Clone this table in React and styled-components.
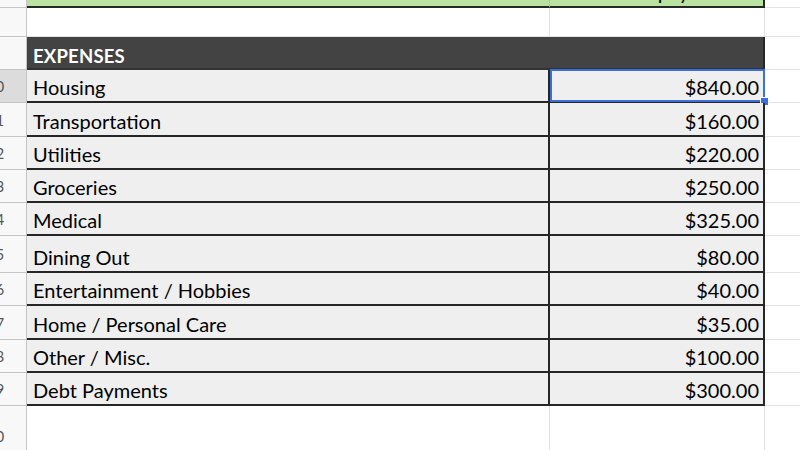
import styled, { createGlobalStyle } from "styled-components";

const GlobalStyle = createGlobalStyle`
  html, body {
    margin: 0;
    padding: 0;
    background: #ffffff;
    overflow: hidden;
  }
  body {
    font-family: Lato, "Open Sans", sans-serif;
  }
`;

const gridLine = "#e2e2e2";
const headerLine = "#c4c4c4";
const dark = "#262626";
const selectBlue = "#3c6fd9";

const cellBg = {
  green: "#b9e1a0",
  blank: "#ffffff",
  head: "#434343",
  data: "#efefef",
  empty: "#ffffff",
};

const Sheet = styled.div`
  margin: -25px 0 0 -35px;
  width: 835px;
`;

const Row = styled.div`
  display: grid;
  grid-template-columns: 62px 523px 215px 1fr;
  height: ${(p) => p.$h}px;
`;

const RowHeader = styled.div`
  box-sizing: border-box;
  background: ${(p) => (p.$active ? "#dcdcdc" : "#f8f8f8")};
  border-right: 1px solid ${headerLine};
  border-bottom: 1px solid ${headerLine};
  display: flex;
  align-items: center;
  justify-content: center;
  font-family: Lato, sans-serif;
  font-size: 15px;
  color: #555555;
`;

const Cell = styled.div`
  position: relative;
  box-sizing: border-box;
  display: flex;
  align-items: flex-end;
  justify-content: ${(p) => (p.$right ? "flex-end" : "flex-start")};
  padding: 0 4px 4px 6px;
  background: ${(p) => cellBg[p.$kind]};
  border-bottom: ${(p) =>
    p.$kind === "blank" || p.$kind === "empty"
      ? `1px solid ${gridLine}`
      : `2px solid ${p.$kind === "head" ? "#333333" : dark}`};
  border-right: ${(p) =>
    p.$kind === "blank" || p.$kind === "empty"
      ? `1px solid ${gridLine}`
      : p.$kind === "head" && !p.$last
        ? "none"
        : p.$kind === "green" && !p.$last
          ? "1px solid #a6cf8d"
          : `2px solid ${dark}`};
  font-size: 20px;
  line-height: 20px;
  color: ${(p) => (p.$kind === "head" ? "#ffffff" : "#000000")};
  font-weight: ${(p) => (p.$kind === "head" ? 700 : 400)};
  white-space: nowrap;
  overflow: ${(p) => (p.$selected ? "visible" : "hidden")};
`;

const HeadLabel = styled.span`
  font-size: 18.5px;
  letter-spacing: 0.2px;
  margin-bottom: -2px;
`;

const GreenLabel = styled.span`
  padding-right: 70px;
`;

const OuterCell = styled.div`
  box-sizing: border-box;
  border-bottom: 1px solid ${gridLine};
  background: #ffffff;
`;

const Selection = styled.div`
  position: absolute;
  top: -1px;
  left: 0;
  right: -2px;
  bottom: -1px;
  border: 2px solid ${selectBlue};
  pointer-events: none;
`;

const Handle = styled.div`
  position: absolute;
  right: -6px;
  bottom: -6px;
  width: 7px;
  height: 7px;
  background: ${selectBlue};
  border: 1px solid #ffffff;
  box-sizing: content-box;
`;

const expenses = [
  { label: "Housing", amount: "$840.00", h: 33 },
  { label: "Transportation", amount: "$160.00", h: 34 },
  { label: "Utilities", amount: "$220.00", h: 33 },
  { label: "Groceries", amount: "$250.00", h: 33 },
  { label: "Medical", amount: "$325.00", h: 33 },
  { label: "Dining Out", amount: "$80.00", h: 37 },
  { label: "Entertainment / Hobbies", amount: "$40.00", h: 33 },
  { label: "Home / Personal Care", amount: "$35.00", h: 34 },
  { label: "Other / Misc.", amount: "$100.00", h: 33 },
  { label: "Debt Payments", amount: "$300.00", h: 33 },
];

export default function App() {
  return (
    <>
      <GlobalStyle />
      <Sheet>
        <Row $h={33}>
          <RowHeader>7</RowHeader>
          <Cell $kind="green" />
          <Cell $kind="green" $last $right>
            <GreenLabel>Take-home pay</GreenLabel>
          </Cell>
          <OuterCell />
        </Row>
        <Row $h={29}>
          <RowHeader>8</RowHeader>
          <Cell $kind="blank" />
          <Cell $kind="blank" />
          <OuterCell />
        </Row>
        <Row $h={33}>
          <RowHeader>9</RowHeader>
          <Cell $kind="head">
            <HeadLabel>EXPENSES</HeadLabel>
          </Cell>
          <Cell $kind="head" $last />
          <OuterCell />
        </Row>
        {expenses.map((item, idx) => (
          <Row key={item.label} $h={item.h}>
            <RowHeader $active={idx === 0}>{idx + 10}</RowHeader>
            <Cell $kind="data">{item.label}</Cell>
            <Cell $kind="data" $right $selected={idx === 0}>
              {item.amount}
              {idx === 0 && (
                <Selection>
                  <Handle />
                </Selection>
              )}
            </Cell>
            <OuterCell />
          </Row>
        ))}
        <Row $h={60}>
          <RowHeader>20</RowHeader>
          <Cell $kind="empty" />
          <Cell $kind="empty" />
          <OuterCell />
        </Row>
      </Sheet>
    </>
  );
}
